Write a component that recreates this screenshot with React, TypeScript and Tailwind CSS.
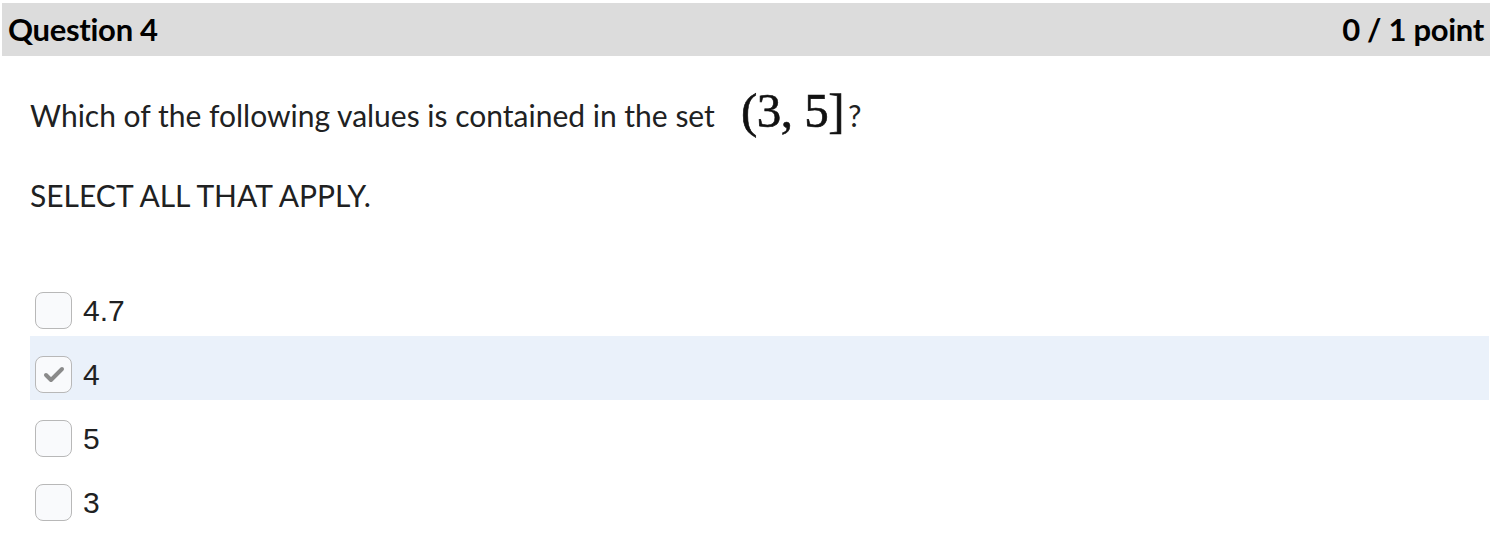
import { Check } from 'lucide-react'

const options = [
  { label: '4.7', checked: false },
  { label: '4', checked: true },
  { label: '5', checked: false },
  { label: '3', checked: false },
]

export default function App() {
  return (
    <div className="h-[538px] w-[1492px] bg-white pt-[3px] font-['Lato','Noto_Sans',sans-serif] text-[#202122]">
      <div className="mx-[2px] flex h-[53px] items-center justify-between bg-[#dcdcdc] pl-[6px] pr-[6px]">
        <h2 className="text-[31px] font-bold tracking-[-0.3px] text-black">Question 4</h2>
        <div className="text-[31px] font-bold tracking-[-0.3px] text-black">0 / 1 point</div>
      </div>

      <div className="pl-[30px] pr-[3px]">
        <p className="mt-[23px] flex items-baseline text-[30px] leading-[64px]">
          <span>Which of the following values is contained in the set</span>
          <span className="ml-[26px] font-['Liberation_Serif',serif] text-[49px] leading-[64px] tracking-[-0.5px] text-[#111] [-webkit-text-stroke:0.6px_#111]">(3, 5]</span>
          <span className="ml-[4px]">?</span>
        </p>
        <p className="mt-[28px] text-[30px] leading-[40px]">SELECT ALL THAT APPLY.</p>

        <div className="mt-[57px] flex flex-col">
          {options.map((o) => (
            <label
              key={o.label}
              className={`flex h-[64px] items-start gap-[11px] pl-[5px] pt-[20px] ${o.checked ? 'bg-[#eaf1fa]' : ''}`}
            >
              <span className="flex h-[37px] w-[37px] items-center justify-center rounded-[8px] border border-[#b8b8b8] bg-[#f9fafc]">
                {o.checked && <Check className="h-[24px] w-[24px] text-[#8a8a8a]" strokeWidth={4} />}
              </span>
              <span className="font-['Liberation_Sans',Arial,sans-serif] text-[30px] leading-[37px] text-[#202122]">{o.label}</span>
            </label>
          ))}
        </div>
      </div>
    </div>
  )
}
